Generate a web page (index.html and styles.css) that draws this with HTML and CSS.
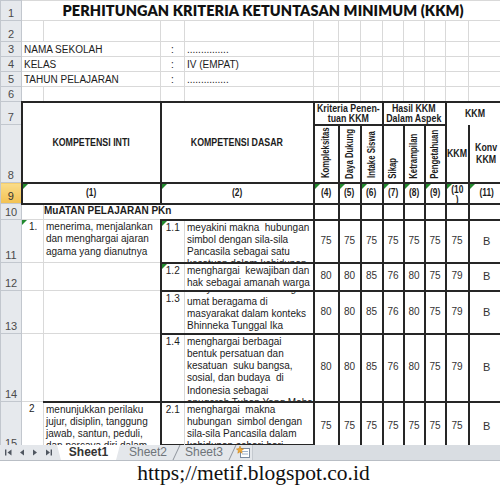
FILE: index.html
```html
<!DOCTYPE html>
<html>
<head>
<meta charset="utf-8">
<link rel="stylesheet" href="styles.css">
</head>
<body>
<div class="sheet">
<table class="grid">
<colgroup>
<col class="c-rh"><col class="c-a"><col class="c-b"><col class="c-c"><col class="c-d"><col class="c-e"><col class="c-f"><col class="c-g"><col class="c-h"><col class="c-i"><col class="c-j"><col class="c-k"><col class="c-l">
</colgroup>
<tr class="r1"><td class="rh">1</td><td colspan="12" class="title">PERHITUNGAN KRITERIA KETUNTASAN MINIMUM (KKM)</td></tr>
<tr class="r2"><td class="rh">2</td><td></td><td></td><td></td><td></td><td></td><td></td><td></td><td></td><td></td><td></td><td></td><td></td></tr>
<tr class="r3"><td class="rh">3</td><td colspan="2" class="lbl">NAMA SEKOLAH</td><td class="colon">:</td><td class="lbl">...............</td><td></td><td></td><td></td><td></td><td></td><td></td><td></td><td></td></tr>
<tr class="r3"><td class="rh">4</td><td colspan="2" class="lbl">KELAS</td><td class="colon">:</td><td class="lbl">IV (EMPAT)</td><td></td><td></td><td></td><td></td><td></td><td></td><td></td><td></td></tr>
<tr class="r3"><td class="rh">5</td><td colspan="2" class="lbl">TAHUN PELAJARAN</td><td class="colon">:</td><td class="lbl">...............</td><td></td><td></td><td></td><td></td><td></td><td></td><td></td><td></td></tr>
<tr class="r3"><td class="rh">6</td><td></td><td></td><td></td><td></td><td></td><td></td><td></td><td></td><td></td><td></td><td></td><td></td></tr>
<tr class="r7"><td class="rh">7</td>
<td colspan="2" rowspan="2" class="k hd"><div class="nw"><span>KOMPETENSI INTI</span></div></td>
<td colspan="2" rowspan="2" class="k hd"><div class="nw"><span>KOMPETENSI DASAR</span></div></td>
<td colspan="3" class="k hd grp"><div class="nw"><span>Kriteria Penen-<br>tuan KKM</span></div></td>
<td colspan="3" class="k hd grp"><div class="nw"><span>Hasil KKM<br>Dalam Aspek</span></div></td>
<td colspan="2" class="k hd nob"><div class="nw"><span>KKM</span></div></td></tr>
<tr class="r8"><td class="rh">8</td>
<td class="k vtc"><div class="vw"><span class="vt">Kompleksitas</span></div></td>
<td class="k vtc"><div class="vw"><span class="vt">Daya Dukung</span></div></td>
<td class="k vtc"><div class="vw"><span class="vt">Intake Siswa</span></div></td>
<td class="k vtc"><div class="vw"><span class="vt">Sikap</span></div></td>
<td class="k vtc"><div class="vw"><span class="vt">Ketrampilan</span></div></td>
<td class="k vtc"><div class="vw"><span class="vt">Pengetahuan</span></div></td>
<td class="k hd not"><div class="nw"><span>KKM</span></div></td>
<td class="k hd not"><div class="nw"><span>Konv<br>KKM</span></div></td></tr>
<tr class="r9"><td class="rh sel">9</td>
<td colspan="2" class="k num tri"><div class="nw"><span>(1)</span></div></td>
<td colspan="2" class="k num tri"><div class="nw"><span>(2)</span></div></td>
<td class="k num tri"><div class="nw"><span>(4)</span></div></td>
<td class="k num tri"><div class="nw"><span>(5)</span></div></td>
<td class="k num tri"><div class="nw"><span>(6)</span></div></td>
<td class="k num tri"><div class="nw"><span>(7)</span></div></td>
<td class="k num tri"><div class="nw"><span>(8)</span></div></td>
<td class="k num tri"><div class="nw"><span>(9)</span></div></td>
<td class="k num tri"><div class="n10"><span>(10<br>)</span></div></td>
<td class="k num tri"><div class="nw"><span>(11)</span></div></td></tr>
<tr class="r10"><td class="rh">10</td><td></td><td colspan="3" class="kt sub">MuATAN PELAJARAN PKn</td><td class="k"></td><td class="k"></td><td class="k"></td><td class="k"></td><td class="k"></td><td class="k"></td><td class="k"></td><td class="k"></td></tr>
<tr class="r11"><td class="rh">11</td>
<td class="no tri"><div class="tx">1.</div></td>
<td class="top"><div class="tx h11">menerima, menjalankan<br>dan menghargai ajaran<br>agama yang dianutnya</div></td>
<td class="k cc tri"><div class="tx">1.1</div></td>
<td class="k cd"><div class="tx h11">meyakini makna&nbsp; hubungan<br>simbol dengan sila-sila<br>Pancasila sebagai satu<br>kesatuan dalam kehidupan</div></td>
<td class="k v">75</td><td class="k v">75</td><td class="k v">75</td><td class="k v">75</td><td class="k v">75</td><td class="k v">75</td><td class="k v">75</td><td class="k v b">B</td></tr>
<tr class="r12"><td class="rh">12</td>
<td></td><td></td>
<td class="k cc tri"><div class="tx">1.2</div></td>
<td class="k cd"><div class="tx h12">menghargai&nbsp; kewajiban dan<br>hak sebagai amanah warga<br>negara</div></td>
<td class="k v">80</td><td class="k v">80</td><td class="k v">85</td><td class="k v">76</td><td class="k v">80</td><td class="k v">75</td><td class="k v">79</td><td class="k v b">B</td></tr>
<tr class="r13"><td class="rh">13</td>
<td></td><td></td>
<td class="k cc"><div class="tx">1.3</div></td>
<td class="k cd"><div class="tx h13 end"><div>menyadari hakikat keragaman<br>umat beragama di<br>masyarakat dalam konteks<br>Bhinneka Tunggal Ika</div></div></td>
<td class="k v">80</td><td class="k v">80</td><td class="k v">85</td><td class="k v">76</td><td class="k v">80</td><td class="k v">75</td><td class="k v">79</td><td class="k v b">B</td></tr>
<tr class="r14"><td class="rh">14</td>
<td></td><td></td>
<td class="k cc"><div class="tx">1.4</div></td>
<td class="k cd"><div class="tx h14">menghargai berbagai<br>bentuk persatuan dan<br>kesatuan&nbsp; suku bangsa,<br>sosial, dan budaya&nbsp; di<br>Indonesia sebagai<br>anugerah Tuhan Yang Maha<br>Esa</div></td>
<td class="k v">80</td><td class="k v">80</td><td class="k v">85</td><td class="k v">76</td><td class="k v">80</td><td class="k v">75</td><td class="k v">79</td><td class="k v b">B</td></tr>
<tr class="r15"><td class="rh">15</td>
<td class="no"><div class="tx">2</div></td>
<td class="kt top"><div class="tx h15">menunjukkan perilaku<br>jujur, disiplin, tanggung<br>jawab, santun, peduli,<br>dan percaya diri dalam<br>berinteraksi</div></td>
<td class="k cc"><div class="tx ln">2.1</div></td>
<td class="k cd"><div class="tx ln">menghargai&nbsp; makna<br>hubungan&nbsp; simbol dengan<br>sila-sila Pancasila dalam<br>kehidupan sehari-hari</div></td>
<td class="k v">75</td><td class="k v">75</td><td class="k v">75</td><td class="k v">75</td><td class="k v">75</td><td class="k v">75</td><td class="k v">75</td><td class="k v b">B</td></tr>
</table>
</div>
<div class="tabs">
  <div class="nav">
    <svg width="57" height="15" viewBox="0 0 57 15">
      <rect x="5" y="4.5" width="1.4" height="6" fill="#4f5660"/>
      <polygon points="11.5,4.5 7.5,7.5 11.5,10.5" fill="#4f5660"/>
      <polygon points="24,4.5 20,7.5 24,10.5" fill="#4f5660"/>
      <polygon points="33,4.5 37,7.5 33,10.5" fill="#4f5660"/>
      <polygon points="46,4.5 50,7.5 46,10.5" fill="#4f5660"/>
      <rect x="50.6" y="4.5" width="1.4" height="6" fill="#4f5660"/>
    </svg>
  </div>
  <div class="tab active">Sheet1</div>
  <div class="tab">Sheet2</div>
  <div class="tab">Sheet3</div>
  <div class="ins">
    <svg width="16" height="15" viewBox="0 0 16 15">
      <rect x="5.5" y="3.5" width="9" height="9" fill="#fff" stroke="#7b8ba0"/>
      <rect x="7" y="6" width="6" height="1" fill="#9fb3cc"/>
      <rect x="7" y="8.5" width="6" height="1" fill="#9fb3cc"/>
      <polygon points="5,1 6,3.6 8.6,4 6.6,5.6 7.2,8.2 5,6.8 2.8,8.2 3.4,5.6 1.4,4 4,3.6" fill="#f0a830" stroke="#c47a12" stroke-width="0.5"/>
    </svg>
  </div>
  <div class="rest"></div>
</div>
<div class="url">https;//metif.blogspot.co.id</div>
</body>
</html>
```
FILE: styles.css
```css
* { box-sizing: border-box; }
html, body { margin: 0; padding: 0; background: #fff; }
body {
  width: 500px;
  height: 500px;
  overflow: hidden;
  font-family: "Liberation Sans", Arial, sans-serif;
  color: #1c1c1c;
}
.sheet { height: 445px; overflow: hidden; }
.grid {
  border-collapse: collapse;
  table-layout: fixed;
  width: 503px;
  font-size: 10px;
}
.grid td {
  border: 1px solid #d9d9d9;
  padding: 0;
  overflow: hidden;
  white-space: nowrap;
  line-height: 12.3px;
}
.c-rh { width: 21px; }
.c-a { width: 22px; }
.c-b { width: 117px; }
.c-c { width: 24px; }
.c-d { width: 129px; }
.c-e { width: 25px; }
.c-f { width: 22px; }
.c-g { width: 22px; }
.c-h { width: 21px; }
.c-i { width: 21px; }
.c-j { width: 21px; }
.c-k { width: 23px; }
.c-l { width: 36px; }

.r1 { height: 20px; }
.r2 { height: 21px; }
.r3 { height: 15px; }
.r7 { height: 23px; }
.r8 { height: 58px; }
.r9 { height: 21px; }
.r10 { height: 16px; }
.r11 { height: 42px; }
.r12 { height: 27px; }
.r13 { height: 42px; }
.r14 { height: 67px; }
.r15 { height: 48px; }

.grid td.rh {
  background: #e6e9ed;
  border: 1px solid #c2c7ce;
  color: #4b4b4b;
  font-size: 11px;
  text-align: center;
  vertical-align: bottom;
  line-height: 13px;
}
.grid td.rh.sel {
  background: linear-gradient(#fadd8a, #f2c152);
  color: #333;
}

.grid td.title {
  font-family: Lato, "Liberation Sans", sans-serif;
  font-weight: 800;
  font-size: 14.5px;
  text-align: center;
  vertical-align: middle;
  color: #111;
  padding-top: 2px;
  letter-spacing: 0.1px;
}
.grid td.lbl { padding-left: 2px; vertical-align: bottom; line-height: 13px; }
.grid td.colon { text-align: center; vertical-align: bottom; line-height: 13px; }

.grid td.k { border: 2px solid #262626; }
.grid td.kt { border-top: 2px solid #262626; }
.grid td.nob { border-bottom-style: hidden; }
.grid td.not { border-top-style: hidden; }
.grid td.cc { border-right: 1px solid #d9d9d9; }
.grid td.cd { border-left: 1px solid #d9d9d9; }

.hd {
  font-weight: 700;
  font-size: 10.5px;
  text-align: center;
  vertical-align: middle;
}
.nw {
  display: flex;
  justify-content: center;
  align-items: center;
}
.nw span {
  flex: none;
  white-space: nowrap;
  text-align: center;
  transform: scaleX(0.84);
}
.grid td.grp { line-height: 10.5px; font-size: 10.5px; }
.grid td.vtc { vertical-align: bottom; padding-bottom: 3px; }
.vw {
  height: 52px;
  display: flex;
  flex-direction: column;
  justify-content: flex-end;
  align-items: center;
}
.vt {
  flex: none;
  writing-mode: vertical-rl;
  transform: translateY(11%) rotate(180deg) scaleY(0.78);
  font-weight: 700;
  font-size: 10px;
  line-height: 12px;
  white-space: nowrap;
}
.num {
  font-weight: 700;
  font-size: 10px;
  text-align: center;
  vertical-align: middle;
}
.n10 {
  height: 19px;
  overflow: hidden;
  line-height: 10px;
  padding-top: 1px;
  text-align: center;
}
.n10 span { display: inline-block; transform: scaleX(0.84); }
.tri { position: relative; }
.tri::before {
  content: "";
  position: absolute;
  left: 0;
  top: 0;
  border-top: 5px solid #22892e;
  border-right: 5px solid transparent;
}
.sub { font-weight: 700; padding-left: 2px; font-size: 10px; vertical-align: middle; }
.grid td.no { vertical-align: top; padding: 0 0 0 5px; }
.grid td.top { vertical-align: top; }
.grid td.cc { text-align: center; vertical-align: top; }
.grid td.cd { vertical-align: top; }
.tx { overflow: hidden; padding: 1px 2px 0; text-align: left; }
.cc .tx { text-align: center; padding: 1px 0 0; }
.h11 { height: 41px; }
.h12 { height: 26px; }
.h13 { height: 41px; }
.h14 { height: 66px; }
.h15 { height: 47px; }
.end { display: flex; flex-direction: column; justify-content: flex-end; padding-top: 0; }
.tx.ln { height: 43px; border-bottom: 2px solid #262626; }
.grid td.v { text-align: center; vertical-align: middle; color: #333; }
.grid td.b { font-size: 11px; }

.tabs {
  height: 16px;
  display: flex;
  background: #e4e7eb;
  border-bottom: 1px solid #b9bec5;
  font-size: 12px;
  line-height: 15px;
}
.nav { width: 57px; flex: none; }
.tab {
  position: relative;
  width: 56px;
  flex: none;
  text-align: center;
  color: #6f747a;
}
.tab::after {
  content: "";
  position: absolute;
  right: -1px;
  top: 0;
  bottom: 0;
  width: 1px;
  background: #8e949c;
  transform: skewX(-25deg);
}
.tab.active {
  width: 63px;
  background: #fff;
  color: #333;
  font-weight: 700;
  clip-path: polygon(0 0, 100% 0, calc(100% - 4px) 100%, 4px 100%);
}
.tab.active::after { display: none; }
.ins { width: 20px; flex: none; padding-left: 3px; }
.rest { flex: 1; background: #d9dde2; border-left: 1px solid #c4c9cf; }
.url {
  font-family: "Liberation Serif", "Times New Roman", serif;
  font-size: 21.5px;
  line-height: 24px;
  text-align: center;
  padding-left: 7px;
  color: #111;
}
```
